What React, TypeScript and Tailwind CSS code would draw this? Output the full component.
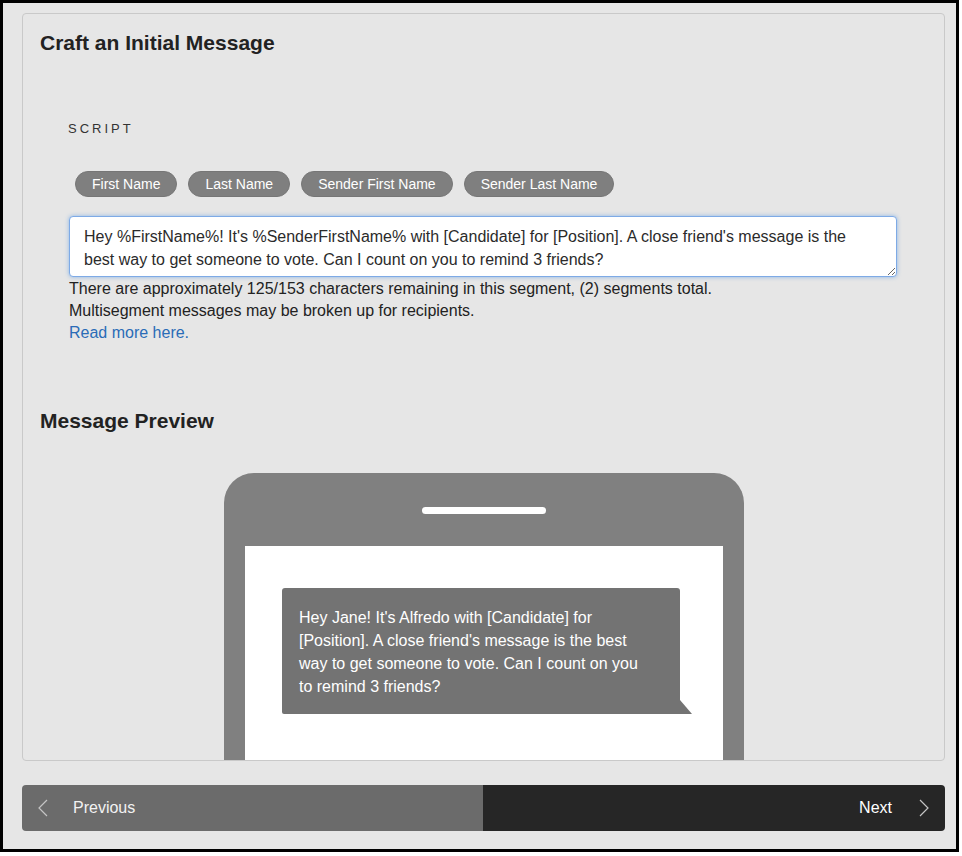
import React from "react";

const tokens = ["First Name", "Last Name", "Sender First Name", "Sender Last Name"];

const script =
  "Hey %FirstName%! It's %SenderFirstName% with [Candidate] for [Position]. A close friend's message is the best way to get someone to vote. Can I count on you to remind 3 friends?";

function Chevron({ dir }: { dir: "left" | "right" }) {
  return (
    <svg width="10" height="18" viewBox="0 0 10 18" fill="none">
      <polyline
        points={dir === "left" ? "9,1 1,9 9,17" : "1,1 9,9 1,17"}
        stroke="#c4c4c4"
        strokeWidth="1.2"
      />
    </svg>
  );
}

export default function App() {
  return (
    <div className="min-h-screen bg-white font-['Liberation_Sans',Arial,sans-serif]">
      <div className="h-[852px] w-[959px] border-[3px] border-black bg-[#e6e6e6] pl-[19px] pt-[10px]">
        {/* editor pane */}
        <div className="h-[748px] w-[923px] overflow-hidden rounded-[4px] border border-[#c9c9c9] pl-[17px] pt-[17px]">
          <h2 className="text-[21px] font-bold leading-[24px] text-[#222]">Craft an Initial Message</h2>

          <div className="ml-[28px] mt-[66px] text-[13px] leading-[16px] tracking-[3px] text-[#333]">SCRIPT</div>

          <div className="ml-[35px] mt-[34px] flex gap-[11px]">
            {tokens.map((t) => (
              <button
                key={t}
                className="h-[26px] rounded-full border border-[#767676] bg-[#7f7f7f] px-[16px] text-[14px] leading-[24px] text-white"
              >
                {t}
              </button>
            ))}
          </div>

          <textarea
            defaultValue={script}
            className="ml-[29px] mt-[19px] block h-[61px] w-[828px] rounded-[4px] border border-[#7eaae6] bg-white pl-[14px] pr-[40px] pt-[8px] text-[16px] leading-[23px] text-[#2b2b2b] shadow-[0_0_4px_rgba(80,150,230,0.6)] outline-none"
          />

          <div className="ml-[29px] mt-[1px] text-[16px] leading-[22px] text-[#222]">
            <p>There are approximately 125/153 characters remaining in this segment, (2) segments total.</p>
            <p>Multisegment messages may be broken up for recipients.</p>
            <a href="#" className="text-[#2a6cb7]">Read more here.</a>
          </div>

          <h2 className="mt-[65px] text-[21px] font-bold leading-[24px] text-[#222]">Message Preview</h2>

          {/* phone mockup */}
          <div className="ml-[184px] mt-[40px] h-[340px] w-[520px] rounded-t-[30px] bg-[#808080] px-[21px] pt-[34px]">
            <div className="mx-auto h-[7px] w-[124px] rounded-full bg-white" />
            <div className="mt-[32px] h-[300px] bg-white pl-[37px] pt-[42px]">
              <div className="relative w-[398px] rounded-t-[3px] rounded-bl-[2px] bg-[#737373] pb-[16px] pl-[17px] pr-[26px] pt-[18px] text-[16px] leading-[23px] text-white">
                Hey Jane! It's Alfredo with [Candidate] for [Position]. A close friend's message is the best way to get someone to vote. Can I count on you to remind 3 friends?
                <svg className="absolute bottom-0 right-[-12px]" width="12" height="14" viewBox="0 0 12 14">
                  <polygon points="0,0 12,14 0,14" fill="#737373" />
                </svg>
              </div>
            </div>
          </div>
        </div>

        {/* wizard nav */}
        <div className="mt-[24px] flex h-[46px] w-[923px] overflow-hidden rounded-[4px] text-[16px]">
          <button className="flex w-[461px] items-center bg-[#6b6b6b] pl-[16px] text-[#f2f2f2]">
            <Chevron dir="left" />
            <span className="ml-[25px]">Previous</span>
          </button>
          <button className="flex flex-1 items-center justify-end bg-[#262626] pr-[16px] text-white">
            <span className="mr-[27px]">Next</span>
            <Chevron dir="right" />
          </button>
        </div>
      </div>
    </div>
  );
}
